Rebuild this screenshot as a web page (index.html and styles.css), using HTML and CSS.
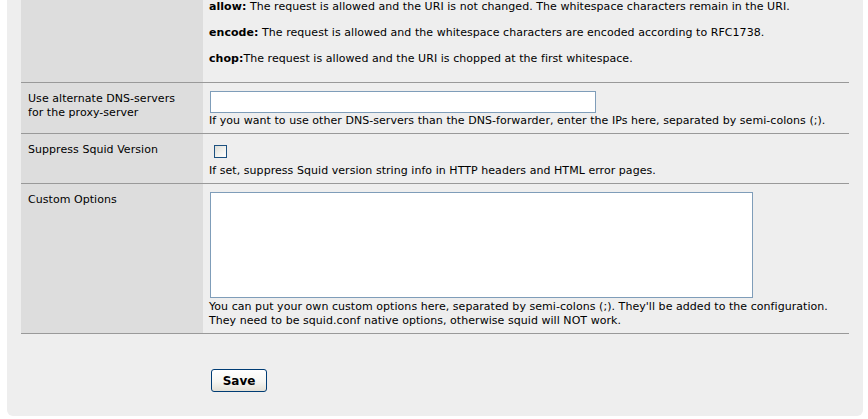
FILE: index.html
```html
<!DOCTYPE html>
<html>
<head>
<meta charset="utf-8">
<title>Proxy settings</title>
<link rel="stylesheet" href="styles.css">
</head>
<body>
<div class="panel">
  <table class="form">
    <colgroup><col class="col-label"><col></colgroup>
    <tr>
      <td class="label"></td>
      <td class="value first">
        <p><b>allow:</b> The request is allowed and the URI is not changed. The whitespace characters remain in the URI.</p>
        <p><b>encode:</b> The request is allowed and the whitespace characters are encoded according to RFC1738.</p>
        <p><b>chop:</b>The request is allowed and the URI is chopped at the first whitespace.</p>
      </td>
    </tr>
    <tr>
      <td class="label">Use alternate DNS-servers<br>for the proxy-server</td>
      <td class="value">
        <input class="text" type="text">
        <div>If you want to use other DNS-servers than the DNS-forwarder, enter the IPs here, separated by semi-colons (;).</div>
      </td>
    </tr>
    <tr>
      <td class="label">Suppress Squid Version</td>
      <td class="value">
        <input class="check" type="checkbox">
        <div>If set, suppress Squid version string info in HTTP headers and HTML error pages.</div>
      </td>
    </tr>
    <tr>
      <td class="label">Custom Options</td>
      <td class="value">
        <textarea class="area"></textarea>
        <div>You can put your own custom options here, separated by semi-colons (;). They'll be added to the configuration.<br>They need to be squid.conf native options, otherwise squid will NOT work.</div>
      </td>
    </tr>
  </table>
  <div class="actions">
    <button class="save" type="button">Save</button>
  </div>
</div>
</body>
</html>
```

FILE: styles.css
```css
html, body {
  margin: 0;
  background: #ffffff;
}

body {
  font-family: "DejaVu Sans", "Liberation Sans", sans-serif;
  font-size: 11px;
  line-height: 14px;
  letter-spacing: 0.05px;
  color: #000000;
}

.panel {
  margin-left: 7px;
  width: 828px;
  padding: 0 14px 24px;
  background: #eeeeee;
  border-radius: 0 0 6px 6px;
}

.form {
  width: 828px;
  border-collapse: collapse;
  table-layout: fixed;
}

.col-label {
  width: 182px;
}

.form td {
  vertical-align: top;
  border-bottom: 1px solid #999999;
}

.label {
  background: #dddddd;
  padding: 9px 7px 0;
}

.value {
  padding: 8px 6px 5px;
}

.value.first {
  padding: 0 6px 16px;
}

.value p {
  margin: 0 0 12px;
}

.value p:last-child {
  margin-bottom: 0;
}

.text {
  display: block;
  box-sizing: border-box;
  width: 386px;
  height: 22px;
  margin: 0 0 1px 1px;
  border: 1px solid #7f9db9;
  background: #ffffff;
  padding: 0 2px;
  font: inherit;
}

.check {
  -webkit-appearance: none;
  appearance: none;
  display: block;
  box-sizing: border-box;
  width: 13px;
  height: 13px;
  margin: 3px 0 6px 5px;
  border: 1px solid #1c5180;
  background: linear-gradient(135deg, #dcdcd7 0%, #f4f4f0 60%, #ffffff 100%);
}

.area {
  display: block;
  box-sizing: border-box;
  width: 543px;
  height: 106px;
  margin: 0 0 2px 1px;
  border: 1px solid #7f9db9;
  background: #ffffff;
  resize: none;
  font: inherit;
}

.actions {
  padding: 35px 0 0 190px;
}

.save {
  display: block;
  box-sizing: border-box;
  width: 56px;
  height: 23px;
  padding: 0;
  border: 1px solid #003c74;
  border-radius: 3px;
  background: linear-gradient(#ffffff 0%, #f6f6f2 55%, #e3e0d6 100%);
  font-family: "DejaVu Sans", "Liberation Sans", sans-serif;
  font-weight: bold;
  font-size: 12px;
  color: #000000;
}
```
